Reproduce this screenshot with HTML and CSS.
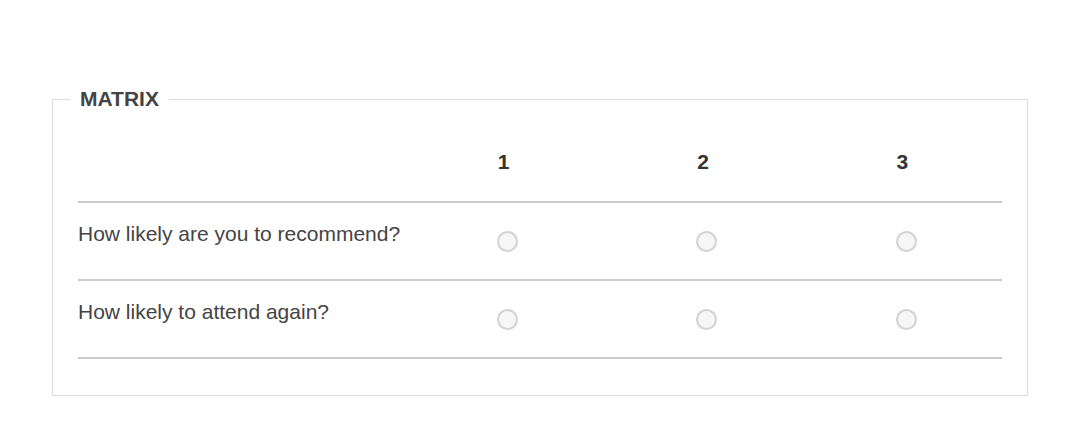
FILE: index.html
```html
<!DOCTYPE html>
<html>
<head>
<meta charset="utf-8">
<link rel="stylesheet" href="styles.css">
</head>
<body>
<fieldset class="matrix">
  <legend class="matrix-title">MATRIX</legend>
  <table class="grid">
    <thead>
      <tr>
        <th class="q-head"></th>
        <th class="opt-head">1</th>
        <th class="opt-head">2</th>
        <th class="opt-head">3</th>
      </tr>
    </thead>
    <tbody>
      <tr>
        <td class="question">How likely are you to recommend?</td>
        <td class="choice"><span class="radio"></span></td>
        <td class="choice"><span class="radio"></span></td>
        <td class="choice"><span class="radio"></span></td>
      </tr>
      <tr>
        <td class="question">How likely to attend again?</td>
        <td class="choice"><span class="radio"></span></td>
        <td class="choice"><span class="radio"></span></td>
        <td class="choice"><span class="radio"></span></td>
      </tr>
    </tbody>
  </table>
</fieldset>
</body>
</html>
```

FILE: styles.css
```css
html, body {
  margin: 0;
  padding: 0;
  background: #fff;
}
body {
  font-family: "Liberation Sans", Arial, sans-serif;
  color: #444;
}
.matrix {
  margin: 87px 0 0 52px;
  width: 924px;
  border: 1px solid #dcdcdc;
  padding: 0 25px 36px;
}
.matrix-title {
  font-size: 21px;
  line-height: 24px;
  font-weight: bold;
  color: #444;
  padding: 0 10px;
  margin-left: -8px;
}
.grid {
  width: 924px;
  border-collapse: collapse;
  table-layout: fixed;
}
.q-head {
  width: 326px;
}
.grid th {
  font-size: 21px;
  font-weight: bold;
  color: #333;
  padding: 39px 0 27px;
  border-bottom: 2px solid #cbcbcb;
  line-height: 24px;
  height: 24px;
}
.grid td {
  border-bottom: 2px solid #cbcbcb;
  height: 78px;
  padding: 0;
  box-sizing: border-box;
}
.question {
  font-size: 21px;
  line-height: 24px;
  color: #444;
  vertical-align: top;
  padding-top: 19px !important;
}
.choice {
  text-align: center;
  vertical-align: middle;
  padding-left: 8px !important;
}
.radio {
  display: inline-block;
  width: 17px;
  height: 17px;
  border: 2px solid #d2d2d2;
  border-radius: 50%;
  background: #f6f6f6;
  vertical-align: middle;
}
```
